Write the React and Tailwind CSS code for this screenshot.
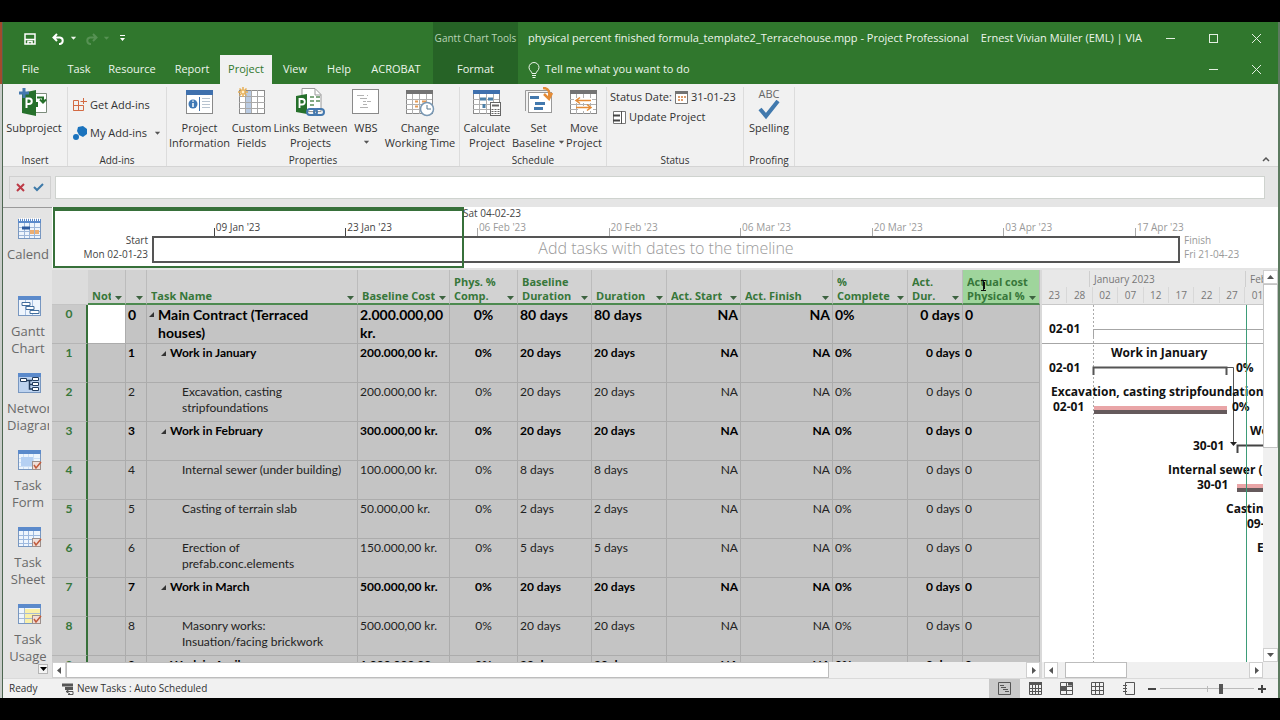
import { useState } from "react";

const TABS = [
  { name: "File", width: "w-[55px]" },
  { name: "Task", width: "w-[42px]" },
  { name: "Resource", width: "w-16" },
  { name: "Report", width: "w-14" },
  { name: "Project", width: "w-[52px]" },
  { name: "View", width: "w-[46px]" },
  { name: "Help", width: "w-[42px]" },
  { name: "ACROBAT", width: "w-[72px]" },
];

const COLUMNS = [
  { label: "Notes", width: "w-[38px]", narrow: true },
  { label: "", width: "w-[21px]" },
  { label: "Task Name", width: "" },
  { label: "Baseline Cost", width: "w-[92px]" },
  { label: "Phys. %\nComp.", width: "w-[68px]" },
  { label: "Baseline\nDuration", width: "w-[74px]" },
  { label: "Duration", width: "w-[75px]" },
  { label: "Act. Start", width: "w-[74px]" },
  { label: "Act. Finish", width: "w-[92px]" },
  { label: "%\nComplete", width: "w-[75px]" },
  { label: "Act.\nDur.", width: "w-[55px]" },
  { label: "Actual cost\nPhysical %", width: "w-[77px]", active: true },
];

const TASKS = [
  { level: 0, name: "Main Contract (Terraced houses)", cost: "2.000.000,00 kr.", days: "80 days" },
  { level: 1, name: "Work in January", cost: "200.000,00 kr.", days: "20 days" },
  { level: 2, name: "Excavation, casting stripfoundations", cost: "200.000,00 kr.", days: "20 days" },
  { level: 1, name: "Work in February", cost: "300.000,00 kr.", days: "20 days" },
  { level: 2, name: "Internal sewer (under building)", cost: "100.000,00 kr.", days: "8 days" },
  { level: 2, name: "Casting of terrain slab", cost: "50.000,00 kr.", days: "2 days" },
  { level: 2, name: "Erection of prefab.conc.elements", cost: "150.000,00 kr.", days: "5 days" },
  { level: 1, name: "Work in March", cost: "500.000,00 kr.", days: "20 days" },
  { level: 2, name: "Masonry works: Insuation/facing brickwork", cost: "500.000,00 kr.", days: "20 days" },
  { level: 1, name: "Work in April", cost: "1.000.000,00 kr.", days: "20 days" },
];

const TIMELINE = ["09 Jan '23", "23 Jan '23", "06 Feb '23", "20 Feb '23", "06 Mar '23", "20 Mar '23", "03 Apr '23", "17 Apr '23"];

const VIEWS = [
  { lines: ["Calendar"], kind: "calendar" },
  { lines: ["Gantt", "Chart"], kind: "gantt" },
  { lines: ["Network", "Diagram"], kind: "network" },
  { lines: ["Task", "Form"], kind: "form" },
  { lines: ["Task", "Sheet"], kind: "sheet" },
  { lines: ["Task", "Usage"], kind: "usage" },
];

function Arrow({ dir = "down", className = "" }) {
  const d = {
    down: "M0 1h7L3.500 5z",
    up: "M0 5h7L3.500 1z",
    left: "M5 0v7L1 3.500z",
    right: "M2 0v7L6 3.500z",
  }[dir];
  return (
    <svg width="7" height="7" viewBox="0 0 7 7" className={`shrink-0 ${className}`}>
      <path d={d} fill="currentColor" />
    </svg>
  );
}

// Calendar/table sheet shared by most of the ribbon icons
function Grid({ head = "#737373", x = 1, y = 3, w = 26, h = 24 }) {
  return (
    <g>
      <rect x={x + 0.5} y={y + 0.5} width={w} height={h - 1} fill="#fff" stroke="#8a8a8a" />
      <path
        d={`M${x} ${y + 9.5}h${w}M${x} ${y + 14.5}h${w}M${x} ${y + 19.5}h${w}M${x + 6.5} ${y}v${h}M${x + 13.5} ${y}v${h}M${x + 20.5} ${y}v${h}`}
        stroke="#b0b0b0"
        fill="none"
      />
      <rect x={x} y={y} width={w + 1} height="4" fill={head} />
    </g>
  );
}

function ProjectBadge() {
  return (
    <g>
      <path d="M0 9l11-2v20L0 25z" fill="#26702b" />
      <path d="M3.500 21v-9h2.500a2.500 2.500 0 0 1 0 5.500H3.500" fill="none" stroke="#fff" strokeWidth="1.800" />
    </g>
  );
}

function RibbonIcon({ kind }) {
  return (
    <svg width="30" height="30" viewBox="0 0 30 30" fill="none">
      {kind === "subproject" && (
        <>
          <path d="M14 6.500h13.500v19H14" fill="#fff" stroke="#7c8c7c" />
          <path d="M18 10.500h6v5M21 12.500l3 3 3-3M18 20v-5" stroke="#26702b" strokeWidth="2" />
          <path d="M3 6l14-3v26L3 26z" fill="#26702b" />
          <path d="M7.500 21v-9.500H10a2.700 2.700 0 0 1 0 5.500H7.500" stroke="#fff" strokeWidth="2" />
          <path d="M5 1v10M0 6h10" stroke="#4478ae" strokeWidth="3" />
        </>
      )}
      {kind === "info" && (
        <>
          <rect x="1.500" y="3.500" width="26" height="23" fill="#fff" stroke="#8a8a8a" />
          <path d="M1 3h27v5H1z" fill="#3f70ad" />
          <circle cx="8" cy="17" r="4.500" fill="#3f78b5" />
          <path d="M8 16v4M8 13.500v1.200" stroke="#fff" strokeWidth="1.500" />
          <path d="M14.500 10v14" stroke="#3f70ad" />
          <path d="M17 11.500h8M17 14.500h8M17 17.500h8M17 20.500h8" stroke="#b8c4d0" />
        </>
      )}
      {kind === "fields" && (
        <>
          <rect x="2.500" y="3.500" width="25" height="23" fill="#fff" stroke="#8a8a8a" />
          <path d="M8 4h6v22H8z" fill="#b9cbe3" />
          <path d="M2 9.500h26M2 15.500h26M2 21.500h26M8.500 3v23M14.500 3v23M20.500 3v23" stroke="#a9a9a9" />
          <path d="M6 0v10M1 5h10M2.500 1.500l7 7M9.500 1.500l-7 7" stroke="#e6ae55" strokeWidth="1.500" />
          <circle cx="6" cy="5" r="2" fill="#fff1cf" stroke="#e6ae55" />
        </>
      )}
      {kind === "links" && (
        <>
          <path d="M6 1.500h13l6 6v17H6z" fill="#fff" stroke="#999" />
          <path d="M19 2v6h6" stroke="#999" />
          <path d="M14 10h4m2 0h4M14 14h4m2 0h4M14 18h4" stroke="#83aa83" strokeWidth="2" />
          <ProjectBadge />
          <rect x="11" y="22" width="10" height="6" rx="3" stroke="#4478ae" strokeWidth="2" />
          <rect x="18" y="22" width="10" height="6" rx="3" stroke="#4478ae" strokeWidth="2" />
        </>
      )}
      {kind === "wbs" && (
        <>
          <rect x="1.500" y="2.500" width="26" height="24" fill="#fff" stroke="#8a8a8a" />
          <path d="M6 8.500h7M9 11.500h7M12 14.500h3m1 0h4M12 17.500h4M9 20.500h8M16 8.500h1" stroke="#b3b3b3" />
        </>
      )}
      {kind === "working" && (
        <>
          <Grid />
          <path d="M10 14.500h3M17 14.500h4M10 19.500h3" stroke="#e39a55" strokeWidth="2" />
          <circle cx="22" cy="22" r="6.500" fill="#fff" stroke="#7897b3" strokeWidth="1.500" />
          <path d="M22 18v4h4" stroke="#58788f" />
        </>
      )}
      {kind === "calculate" && (
        <>
          <Grid head="#3f70ad" />
          <path d="M8 12h6m2 0h5M12 17v4" stroke="#4b80a9" strokeWidth="3" />
          <rect x="18.500" y="15.500" width="10" height="13" fill="#fff" stroke="#666" />
          <path d="M20 18.500h7" stroke="#666" strokeWidth="2" />
          <path d="M20.500 22v5M23.500 22v5M26.500 22v5" stroke="#666" strokeDasharray="1 1" strokeWidth="2" />
        </>
      )}
      {kind === "baseline" && (
        <>
          <path d="M1.500 24V3.500h24" stroke="#999" />
          <rect x="4.500" y="5.500" width="23" height="20" fill="#fff" stroke="#999" />
          <path d="M6 10.500h9M11 16.500h10M10 21.500h9" stroke="#4379ae" strokeWidth="3" />
          <path d="M19 1c6 0 7 4 6 10M20 7l5 5 3-6" stroke="#e48b36" strokeWidth="2.500" />
        </>
      )}
      {kind === "move" && (
        <>
          <Grid />
          <path d="M5 11h18v5H5zM9 19h15v5H9z" fill="#fff" />
          <path d="M22 13.500H8M11 10.500l-4 3 4 3M7 20.500h15M18 17.500l4 3-4 3" stroke="#e48b36" strokeWidth="1.500" />
        </>
      )}
    </svg>
  );
}

function RibbonButton({ kind, lines, width, menu }) {
  return (
    <button className={`flex flex-col items-center text-[11px] leading-[15px] ${width}`}>
      <RibbonIcon kind={kind} />
      <span className="mt-[3px] whitespace-nowrap">{lines[0]}</span>
      <span className="flex items-center gap-[3px] whitespace-nowrap h-[15px]">
        {lines[1]}
        {menu && <Arrow className="text-[#555] scale-75" />}
      </span>
    </button>
  );
}

function Group({ label, width, children }) {
  return (
    <section className={`flex flex-col justify-between border-r border-[#dcdcdc] shrink-0 ${width}`}>
      {children}
      <h2 className="text-[10px] leading-3 text-center">{label}</h2>
    </section>
  );
}

function Ribbon() {
  return (
    <div className="flex relative h-[83px] bg-[#f1f1f1] border-b border-[#d4d4d4] text-[#333] pt-[3px] shrink-0">
      <Group label="Insert" width="w-[65px]">
        <RibbonButton kind="subproject" lines={["Subproject"]} width="w-[62px]" />
      </Group>
      <Group label="Add-ins" width="w-[99px]">
        <div className="flex flex-col gap-2 pt-2 pl-[5px] text-[11px]">
          <button className="flex items-center gap-[3px] h-5 whitespace-nowrap">
            <svg width="14" height="14" viewBox="0 0 14 14" fill="none" stroke="#d36a43">
              <path d="M.5 2.500h5v10h-5zM.5 7.500h10v5h-10M10.500 0v6M7.500 3.500H14" />
            </svg>
            Get Add-ins
          </button>
          <button className="flex items-center gap-[3px] h-5 whitespace-nowrap">
            <svg width="14" height="14" viewBox="0 0 14 14" fill="#1b73bd">
              <path d="M5 1l5-1 4 3v5l-4 3-4-2-2-4z" />
              <circle cx="3" cy="11" r="3" />
            </svg>
            My Add-ins
            <Arrow className="text-[#555] ml-1 scale-75" />
          </button>
        </div>
      </Group>
      <Group label="Properties" width="w-[293px]">
        <div className="flex">
          <RibbonButton kind="info" lines={["Project", "Information"]} width="w-[65px]" />
          <RibbonButton kind="fields" lines={["Custom", "Fields"]} width="w-[39px]" />
          <RibbonButton kind="links" lines={["Links Between", "Projects"]} width="w-[79px]" />
          <RibbonButton kind="wbs" lines={["WBS", ""]} width="w-[32px]" menu />
          <RibbonButton kind="working" lines={["Change", "Working Time"]} width="w-[76px]" />
        </div>
      </Group>
      <Group label="Schedule" width="w-[147px]">
        <div className="flex pl-[2px]">
          <RibbonButton kind="calculate" lines={["Calculate", "Project"]} width="w-[50px]" />
          <RibbonButton kind="baseline" lines={["Set", "Baseline"]} width="w-[53px]" menu />
          <RibbonButton kind="move" lines={["Move", "Project"]} width="w-[38px]" />
        </div>
      </Group>
      <Group label="Status" width="w-[137px]">
        <div className="pl-[3px] text-[11px] leading-5 whitespace-nowrap">
          <button className="flex items-center gap-[3px]">
            Status Date:
            <svg width="13" height="13" viewBox="0 0 13 13" fill="none">
              <path d="M.5.5h12v12H.5z" fill="#fff" stroke="#777" />
              <path d="M0 1.500h13" stroke="#737373" strokeWidth="3" />
              <path d="M3 6h2M6 6h2M9 6h2M3 9h2M6 9h2" stroke="#dc9b6b" strokeWidth="2" />
            </svg>
            31-01-23
          </button>
          <button className="flex items-center gap-[3px] pl-[3px]">
            <svg width="13" height="13" viewBox="0 0 13 13" fill="none">
              <path d="M.5.5h12v12H.5z" fill="#fff" stroke="#777" />
              <path d="M0 4.500h7M0 9.500h7" stroke="#444" strokeWidth="2" />
              <path d="M8.500 0v13" stroke="#555" />
            </svg>
            Update Project
          </button>
        </div>
      </Group>
      <Group label="Proofing" width="w-[51px]">
        <button className="flex flex-col items-center text-[11px] leading-[15px]">
          <span className="leading-[13px] text-[#666]">ABC</span>
          <svg width="22" height="20" viewBox="0 0 22 20" fill="none">
            <path d="M2 9l6 7L20 1" stroke="#4179ad" strokeWidth="4" />
          </svg>
          Spelling
        </button>
      </Group>
      <button aria-label="Collapse the ribbon" className="absolute right-2 bottom-1">
        <svg width="8" height="6" viewBox="0 0 8 6" fill="none" stroke="#555" strokeWidth="1.500">
          <path d="M1 5l3-3 3 3" />
        </svg>
      </button>
    </div>
  );
}

function WindowButton({ kind, label }) {
  return (
    <button aria-label={label} className="w-[43px] h-6 flex items-center justify-center shrink-0">
      <svg width="11" height="11" viewBox="0 0 11 11" fill="none" stroke="#e4f0e2">
        {kind === "min" && <path d="M1 5.500h9" />}
        {kind === "max" && <rect x="1.500" y="1.500" width="8" height="8" />}
        {kind === "close" && <path d="M1 1l9 9M10 1l-9 9" />}
      </svg>
    </button>
  );
}

function Header() {
  const [tab, setTab] = useState("Project");
  return (
    <header className="bg-[#30772d] text-[#edf5ec] text-[11px] shrink-0">
      <div className="flex h-[33px] items-center">
        <div className="flex items-center w-[430px] pl-[21px] shrink-0">
          <button aria-label="Save">
            <svg width="12" height="12" viewBox="0 0 12 12" fill="none" stroke="#fff" strokeWidth="1.500">
              <path d="M1 1h10v10H1z" />
              <path d="M1 6.500h10M4 11V8.500h4V11" />
            </svg>
          </button>
          <button aria-label="Undo" className="flex items-center gap-[5px] ml-4">
            <svg width="13" height="12" viewBox="0 0 13 12" fill="none" stroke="#fff" strokeWidth="2">
              <path d="M5 1L1.500 4.500 5 8M2 4.500h6a3.300 3.300 0 0 1 0 6.500H7" />
            </svg>
            <Arrow className="scale-75" />
          </button>
          <button aria-label="Redo" className="flex items-center gap-[5px] ml-2 text-[#569153]">
            <svg width="13" height="12" viewBox="0 0 13 12" fill="none" stroke="currentColor" strokeWidth="2">
              <path d="M8 1l3.500 3.500L8 8M11 4.500H5A3.300 3.300 0 0 0 5 11h1" />
            </svg>
            <Arrow className="scale-75" />
          </button>
          <button aria-label="Customize quick access" className="ml-[10px]">
            <svg width="5" height="7" viewBox="0 0 5 7" fill="#fff">
              <path d="M0 0h5v1H0zM0 3h5L2.500 6z" />
            </svg>
          </button>
        </div>
        <div className="w-[85px] h-full flex items-center justify-center bg-[#266326] text-[10px] text-[#b9d3b6] shrink-0 whitespace-nowrap">
          Gantt Chart Tools
        </div>
        <h1 className="pl-[10px] whitespace-nowrap">
          physical percent finished formula_template2_Terracehouse.mpp - Project Professional
        </h1>
        <span className="ml-auto pr-[7px] whitespace-nowrap">Ernest Vivian Müller (EML) | VIA</span>
        <WindowButton kind="min" label="Minimize" />
        <WindowButton kind="max" label="Maximize" />
        <WindowButton kind="close" label="Close" />
      </div>
      <nav className="flex h-[29px] items-stretch">
        {TABS.map((t) => (
          <button
            key={t.name}
            onClick={() => setTab(t.name)}
            className={`shrink-0 ${t.width} ${tab === t.name ? "bg-[#f1f1f1] text-[#30772d]" : ""}`}
          >
            {t.name}
          </button>
        ))}
        <span className="w-px" />
        <button className="w-[85px] bg-[#266326]">Format</button>
        <button className="flex items-center gap-[5px] pl-[10px]">
          <svg width="12" height="16" viewBox="0 0 12 16" fill="none" stroke="#edf5ec">
            <path d="M4 11.500c0-2-3-3-3-6a5 5 0 0 1 10 0c0 3-3 4-3 6zM4 13.500h4M4.500 15.500h3" />
          </svg>
          Tell me what you want to do
        </button>
        <div className="ml-auto flex items-center">
          <WindowButton kind="min" label="Minimize document" />
          <WindowButton kind="close" label="Close document" />
        </div>
      </nav>
    </header>
  );
}

function EntryBar() {
  return (
    <div className="flex h-10 bg-[#e5e5e5] px-[6px] pt-[9px] gap-1 shrink-0">
      <div className="flex items-center justify-center gap-2 w-[42px] h-[23px] border border-[#d0d0d0]">
        <button aria-label="Cancel">
          <svg width="9" height="9" viewBox="0 0 9 9" fill="none" stroke="#bd3a46" strokeWidth="2">
            <path d="M1 1l7 7M8 1L1 8" />
          </svg>
        </button>
        <button aria-label="Enter">
          <svg width="11" height="9" viewBox="0 0 11 9" fill="none" stroke="#3e7aa9" strokeWidth="2">
            <path d="M1 4l3 3 6-6" />
          </svg>
        </button>
      </div>
      <input aria-label="Entry" className="flex-1 h-[23px] mr-[7px] bg-white border border-[#cfd3cf] outline-none px-1 text-[11px]" />
    </div>
  );
}

function ViewIcon({ kind }) {
  const task = kind === "form" || kind === "sheet" || kind === "usage";
  return (
    <svg width="24" height="22" viewBox="0 0 24 22" fill="none">
      <rect x=".5" y="1.500" width="22" height="19" fill={kind === "network" ? "#bcd2ef" : "#eef5fd"} stroke="#7897c0" />
      <path d="M0 1h23v4H0z" fill="#5b8acb" />
      {kind === "calendar" && (
        <>
          <path d="M1 1.500h22" stroke="#fff" strokeWidth="3" strokeDasharray="1 1" />
          <path d="M1 9.500h21M1 13.500h21M1 17.500h21M6.500 5v15M11.500 5v15M16.500 5v15" stroke="#9db6d8" />
          <path d="M4 10h8" stroke="#2d5a9e" strokeWidth="3" />
          <path d="M12 12h4v4h-4zM17 12h4v4h-4z" fill="#ecae71" />
        </>
      )}
      {kind === "gantt" && (
        <>
          <path d="M7.500 5v15M14.500 5v15" stroke="#a9c1e2" />
          <path d="M4 7.500h8v3H4zM8 11.500h8v3H8zM12 15.500h9v3h-9z" fill="#fff" stroke="#416d9c" />
        </>
      )}
      {kind === "network" && (
        <>
          <path d="M2.500 6.500h6v3h-6zM14.500 5.500h6v3h-6zM14.500 10.500h6v3h-6zM14.500 15.500h6v3h-6z" fill="#fff" stroke="#223c5e" />
          <path d="M8 8.500h6M11.500 8v9H14M11.500 12.500H14" stroke="#223c5e" strokeWidth="1.500" />
        </>
      )}
      {(kind === "sheet" || kind === "form") && (
        <path d="M1 9.500h21M1 13.500h21M1 17.500h21M5.500 5v15M10.500 5v15M15.500 5v15" stroke={kind === "form" ? "#cddff5" : "#9db9df"} />
      )}
      {kind === "form" && <path d="M3 8h12v9H3z" fill="#b5d0f3" />}
      {kind === "usage" && (
        <>
          <path d="M7 6h15v14H7z" fill="#faf0a8" />
          <path d="M1 10.500h21M1 15.500h21M6.500 5v15" stroke="#a8bcd4" />
        </>
      )}
      {task && (
        <>
          <rect x="14.500" y="12.500" width="8" height="8" fill="#f1ded8" stroke="#9c8f8c" />
          <path d="M16 16l2 3 5-6" stroke="#c05a3c" strokeWidth="1.500" />
        </>
      )}
    </svg>
  );
}

function ViewBar() {
  return (
    <aside className="flex flex-col w-[49px] bg-[#e4e4e4] border-t border-[#9a9a9a] pt-[10px] shrink-0 overflow-hidden text-[#6a6a6a] relative">
      {VIEWS.map((v) => (
        <button key={v.kind} className="h-[77px] shrink-0 ml-1 mr-[3px] flex flex-col overflow-hidden text-left">
          <span className="w-full flex justify-center pl-1">
            <ViewIcon kind={v.kind} />
          </span>
          <span className="block w-max min-w-full text-center text-[13px] leading-[17px] mt-[6px]">
            {v.lines.map((l) => (
              <span key={l} className="block">{l}</span>
            ))}
          </span>
        </button>
      ))}
      <button aria-label="More views" className="absolute right-1 bottom-1 w-[10px] h-[10px] bg-[#f4f4f4] border border-[#b5b5b5] text-black flex items-center justify-center">
        <Arrow />
      </button>
    </aside>
  );
}

function Timeline() {
  return (
    <div className="relative flex h-[61px] bg-white text-[10px] leading-[14px] shrink-0">
      <div className="w-[100px] pt-[26px] pr-1 text-right text-[#444] shrink-0">
        <p>Start</p>
        <p>Mon 02-01-23</p>
      </div>
      <div className="flex-1 min-w-0 pt-[13px]">
        <div className="flex pl-[6%]">
          {TIMELINE.map((d, i) => (
            <div key={d} className="w-[13.62%] shrink-0 flex items-end h-4">
              <span className={`h-2 border-l ${i < 2 ? "border-[#444]" : "border-[#aaa]"}`} />
              <span className={`pl-px h-4 whitespace-nowrap ${i < 2 ? "text-[#444]" : "text-[#999]"}`}>{d}</span>
            </div>
          ))}
        </div>
        <div className="h-[27px] border-2 border-[#555] flex items-center justify-center pb-[3px] font-light text-[16px] text-[#9a9a9a] whitespace-nowrap">
          Add tasks with dates to the timeline
        </div>
      </div>
      <div className="w-[98px] pt-[26px] pl-1 text-[#999] shrink-0">
        <p>Finish</p>
        <p>Fri 21-04-23</p>
      </div>
      {/* pan and zoom frame */}
      <div className="absolute left-[1px] top-0 bottom-0 w-[411px] border-x-2 border-b-2 border-t-4 border-[#37703a]" />
      <span className="absolute left-[411px] top-0 leading-3 text-[#444]">Sat 04-02-23</span>
    </div>
  );
}

function Cell({ children, className = "" }) {
  return <td className={`border-r border-b border-[#acacac] align-top p-0 pt-px px-[2px] ${className}`}>{children}</td>;
}

function TaskRow({ task, index }) {
  const bold = task.level < 2;
  const top = task.level === 0;
  return (
    <tr
      className={`h-[39px] font-['Lato','Open_Sans',sans-serif] ${bold ? "font-bold text-black" : "text-[#222]"} ${
        top ? "text-[14px] leading-[18px]" : "text-[12px] leading-4"
      }`}
    >
      <th className="border-b border-[#b5b5b5] border-r-2 border-r-[#37703a] bg-[#cacaca] align-top pt-px text-[12px] leading-4 font-bold text-[#37773a]">
        {index}
      </th>
      <Cell className={top ? "bg-white" : ""} />
      <Cell>{index}</Cell>
      <Cell>
        <div className={`flex pr-2 ${top ? "" : task.level === 1 ? "pl-3" : "pl-[33px]"}`}>
          {bold && (
            <button aria-label="Collapse" className="w-[9px] shrink-0 h-4 flex items-center">
              <svg width="5" height="5" viewBox="0 0 5 5">
                <path d="M5 0v5H0z" fill="#333" />
              </svg>
            </button>
          )}
          <span>{task.name}</span>
        </div>
      </Cell>
      <Cell>{task.cost}</Cell>
      <Cell className="text-center">0%</Cell>
      <Cell>{task.days}</Cell>
      <Cell>{task.days}</Cell>
      <Cell className="text-right">NA</Cell>
      <Cell className="text-right">NA</Cell>
      <Cell>0%</Cell>
      <Cell className="text-right whitespace-nowrap">0 days</Cell>
      <Cell>0</Cell>
    </tr>
  );
}

function TaskTable() {
  return (
    <div className="relative flex-1 min-h-0 overflow-hidden bg-[#c4c4c4]">
      <table className="w-full table-fixed border-separate border-spacing-0">
        <thead>
          <tr className="h-[35px] text-[11px] leading-[14px] text-[#37773a]">
            <th aria-label="Row" className="w-[36px] bg-[#dcdcdc] border-b border-[#c4c4c4]" />
            {COLUMNS.map((c) => (
              <th
                key={c.label}
                className={`p-0 align-bottom text-left font-bold border-r border-r-[#bcbcbc] border-b-2 border-b-[#4d8a50] ${c.width} ${
                  c.active ? "bg-[#9fd59c]" : "bg-[#d2d2d2]"
                }`}
              >
                <div className={`flex items-end justify-between pl-1 ${c.narrow ? "gap-1 pr-[3px]" : "pr-[3px]"}`}>
                  <span className="whitespace-pre overflow-hidden">{c.label}</span>
                  <button aria-label={`Filter ${c.label}`} className="h-[10px]">
                    <Arrow className="text-[#3d6340]" />
                  </button>
                </div>
              </th>
            ))}
          </tr>
        </thead>
        <tbody>
          {TASKS.map((t, i) => (
            <TaskRow key={t.name} task={t} index={i} />
          ))}
        </tbody>
      </table>
      {/* text cursor over the last heading */}
      <svg width="5" height="11" viewBox="0 0 5 11" className="absolute right-[54px] top-[10px]" stroke="#111" fill="none">
        <path d="M0 .5h5M2.500 0v11M3.500 2v7M0 10.500h5" />
      </svg>
    </div>
  );
}

function Scroll({ className = "", thumb, label }) {
  return (
    <div className={`flex h-4 bg-[#f0f0f0] text-[#555] ${className}`} role="group" aria-label={label}>
      <button aria-label="Scroll left" className="w-[14px] bg-white border border-[#cfcfcf] flex items-center justify-center">
        <Arrow dir="left" />
      </button>
      <div className="flex-1 min-w-0">
        <div className={`h-full bg-white border border-[#bdbdbd] ${thumb}`} />
      </div>
      <button aria-label="Scroll right" className="w-[14px] bg-white border border-[#cfcfcf] flex items-center justify-center">
        <Arrow dir="right" />
      </button>
    </div>
  );
}

function GanttChart() {
  return (
    <svg width="100%" height="100%" className="block" fontSize="12" fontWeight="bold" fill="none">
      <path d="M51.500 0v360" stroke="#aaa" strokeDasharray="2 2" />
      <path d="M0 38.500h221" stroke="#a6a6a6" />
      <path d="M51.500 32v-7.500H221" stroke="#a6a6a6" />
      <path d="M51.500 70v-7.500h133V70" stroke="#555" strokeWidth="2" />
      <path d="M184 62.500h7.500V140" stroke="#555" />
      <path d="M188 137h7l-3.500 4z" fill="#222" />
      <path d="M195.500 148v-7.500H221" stroke="#444" strokeWidth="2" />
      <path d="M52 101h133v4H52zM195 179h26v4h-26z" fill="#e9a5a7" />
      <path d="M52 105h133v4H52zM195 183h26v4h-26z" fill="#655a5c" />
      <g fill="#111">
        <text x="7" y="28">02-01</text>
        <text x="69" y="52">Work in January</text>
        <text x="7" y="67">02-01</text>
        <text x="194" y="67">0%</text>
        <text x="9" y="91">Excavation, casting stripfoundations</text>
        <text x="11" y="106">02-01</text>
        <text x="190" y="106">0%</text>
        <text x="208" y="130">Work in February</text>
        <text x="151" y="145">30-01</text>
        <text x="126" y="169">Internal sewer (under building)</text>
        <text x="155" y="184">30-01</text>
        <text x="184" y="208">Casting of terrain slab</text>
        <text x="205" y="223">09-02</text>
        <text x="215" y="247">Erection of prefab.conc.elements</text>
      </g>
      <path d="M204.500 0v360" stroke="#3d9c78" />
    </svg>
  );
}

function GanttPane() {
  return (
    <div className="flex w-[238px] shrink-0 border-l-2 border-[#d9d9d9]">
      <div className="flex flex-col flex-1 min-w-0">
        <div className="h-[35px] bg-[#e8e8e8] border-b border-[#c8c8c8] text-[10px] leading-4 text-[#777] overflow-hidden shrink-0 pt-px">
          <div className="flex">
            <span className="w-[47px] shrink-0" />
            <span className="w-[156px] shrink-0 border-l border-[#cfcfcf] pl-1">January 2023</span>
            <span className="border-l border-[#cfcfcf] pl-1 whitespace-nowrap">February 2023</span>
          </div>
          <div className="flex">
            {["23", "28", "02", "07", "12", "17", "22", "27", "01"].map((d) => (
              <span key={d} className="w-[11.5%] shrink-0 text-center border-r border-[#d8d8d8]">{d}</span>
            ))}
          </div>
        </div>
        <div className="flex-1 min-h-0 overflow-hidden bg-white">
          <GanttChart />
        </div>
        <Scroll label="Chart scroll" className="shrink-0 pl-[2px]" thumb="ml-[7px] w-[62px]" />
      </div>
      <div className="flex flex-col w-[15px] bg-[#f0f0f0] pb-4 text-[#555] shrink-0">
        <button aria-label="Scroll up" className="h-[14px] bg-white border border-[#cfcfcf] flex items-center justify-center">
          <Arrow dir="up" />
        </button>
        <div className="flex-1">
          <div className="h-[45%] bg-white border border-[#c4c4c4]" />
        </div>
        <button aria-label="Scroll down" className="h-[14px] bg-white border border-[#cfcfcf] flex items-center justify-center">
          <Arrow />
        </button>
      </div>
    </div>
  );
}

function StatusIcon({ kind }) {
  return (
    <svg width="13" height="13" viewBox="0 0 13 13" fill="none" stroke="#555">
      {kind !== "report" && <path d="M.5.5h12v12H.5z" />}
      {kind === "gantt" && <path d="M2 3.500h4M3 5.500h5M5 7.500h5M7 9.500h4" />}
      {kind === "usage" && (
        <>
          <path d="M3.500 0v13M6.500 0v13M9.500 0v13M0 6.500h13M0 9.500h13" />
          <path d="M0 1.500h13" strokeWidth="3" />
        </>
      )}
      {kind === "team" && (
        <>
          <path d="M0 4.500h13M0 8.500h13M6.500 0v13" />
          <path d="M8 2h5M0 6.500h7" strokeWidth="3" />
        </>
      )}
      {kind === "sheet" && <path d="M4.500 0v13M8.500 0v13M0 4.500h13M0 8.500h13" />}
      {kind === "report" && <path d="M3.500 3V.5h9v12h-9V10M1 3.500h4M1 6.500h4M1 9.500h4M3.500 4v5" />}
    </svg>
  );
}

function StatusBar() {
  const [zoom, setZoom] = useState(65);
  return (
    <footer className="flex items-center h-5 bg-[#f1f1f1] border-t border-[#dadada] text-[10px] text-[#333] shrink-0">
      <span className="w-[59px] pl-[6px]">Ready</span>
      <button className="flex items-center gap-[3px] whitespace-nowrap">
        <svg width="12" height="12" viewBox="0 0 12 12" fill="none" stroke="#555">
          <path d="M0 2h11M3 5.500h8" strokeWidth="3" />
          <path d="M4 8.500h7v3H6M8 6L4 8.500 8 11" />
        </svg>
        New Tasks : Auto Scheduled
      </button>
      <div className="ml-auto flex items-center h-full pr-2">
        {["gantt", "usage", "team", "sheet", "report"].map((k) => (
          <button
            key={k}
            aria-label={`${k} view`}
            className={`flex items-center justify-center h-full w-[31px] ${k === "gantt" ? "bg-[#c9c9c9]" : ""}`}
          >
            <StatusIcon kind={k} />
          </button>
        ))}
        <button aria-label="Zoom out" className="w-4 h-full flex items-center justify-center">
          <svg width="8" height="8" viewBox="0 0 8 8" stroke="#444" strokeWidth="2">
            <path d="M0 4h8" />
          </svg>
        </button>
        <input
          type="range"
          aria-label="Zoom"
          value={zoom}
          onChange={(e) => setZoom(Number(e.target.value))}
          className="w-[94px] h-3 appearance-none bg-[linear-gradient(#bbb,#bbb),linear-gradient(#bbb,#bbb)] bg-[size:100%_1px,1px_6px] bg-center bg-no-repeat [&::-webkit-slider-thumb]:appearance-none [&::-webkit-slider-thumb]:w-1 [&::-webkit-slider-thumb]:h-[10px] [&::-webkit-slider-thumb]:bg-[#555]"
        />
        <button aria-label="Zoom in" className="w-4 h-full flex items-center justify-center">
          <svg width="8" height="8" viewBox="0 0 8 8" stroke="#444" strokeWidth="2">
            <path d="M0 4h8M4 0v8" />
          </svg>
        </button>
      </div>
    </footer>
  );
}

export default function App() {
  return (
    <div className="h-screen bg-black py-[22px] flex overflow-hidden font-['Open_Sans','Noto_Sans',sans-serif]">
      {/* sliver of the window behind */}
      <div className="flex flex-col w-[3px] shrink-0 bg-[#c9cdca] border-r border-[#4d6650]">
        <div className="h-[62px] bg-[#a24a2c]" />
      </div>
      <div className="flex flex-col flex-1 min-w-0 border-r-2 border-[#5c7a5f]">
        <Header />
        <Ribbon />
        <EntryBar />
        <div className="flex flex-1 min-h-0">
          <ViewBar />
          <div className="flex flex-col flex-1 min-w-0 bg-[#e4e4e4]">
            <Timeline />
            <div className="flex flex-1 min-h-0 pt-[2px]">
              <div className="flex flex-col flex-1 min-w-0">
                <TaskTable />
                <Scroll label="Table scroll" className="shrink-0" thumb="w-[79.5%]" />
              </div>
              <GanttPane />
            </div>
          </div>
        </div>
        <StatusBar />
      </div>
    </div>
  );
}
